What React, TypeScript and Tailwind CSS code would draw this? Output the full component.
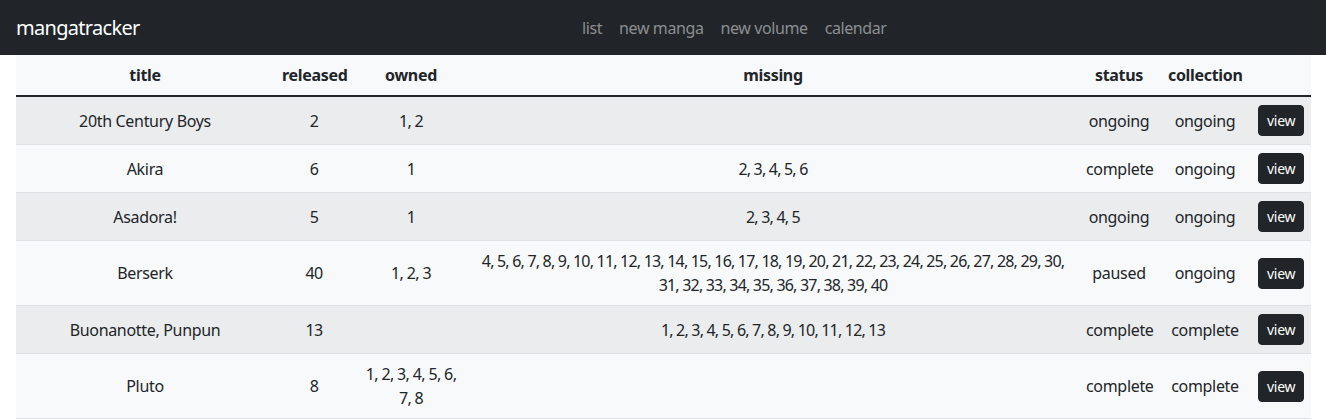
import React from 'react';

type Manga = { title: string; released: number; owned: number[]; status: string; collection: string };

const MANGAS: Manga[] = [
  { title: '20th Century Boys', released: 2, owned: [1, 2], status: 'ongoing', collection: 'ongoing' },
  { title: 'Akira', released: 6, owned: [1], status: 'complete', collection: 'ongoing' },
  { title: 'Asadora!', released: 5, owned: [1], status: 'ongoing', collection: 'ongoing' },
  { title: 'Berserk', released: 40, owned: [1, 2, 3], status: 'paused', collection: 'ongoing' },
  { title: 'Buonanotte, Punpun', released: 13, owned: [], status: 'complete', collection: 'complete' },
  { title: 'Pluto', released: 8, owned: [1, 2, 3, 4, 5, 6, 7, 8], status: 'complete', collection: 'complete' },
];

const missingOf = (m: Manga) =>
  Array.from({ length: m.released }, (_, i) => i + 1).filter((n) => !m.owned.includes(n));

const App: React.FC = () => {
  return (
    <div className="min-h-screen bg-white text-[#212529] text-base leading-6" style={{ fontFamily: '"Noto Sans", sans-serif' }}>
      <nav className="h-[55px] bg-[#212529] flex items-center px-4">
        <a className="text-white text-xl leading-[30px] w-[540px] tracking-[-0.035em]">mangatracker</a>
        <div className="flex gap-[17px] text-[#8c8e91] text-base ml-[26px] tracking-[-0.025em]">
          <a>list</a>
          <a>new manga</a>
          <a>new volume</a>
          <a>calendar</a>
        </div>
      </nav>

      <div className="px-4">
        <table className="w-full table-fixed border-collapse text-center bg-[#f8f9fa] tracking-[-0.02em]">
          <colgroup>
            <col className="w-[258px]" />
            <col className="w-[80px]" />
            <col className="w-[114px]" />
            <col className="w-[610px]" />
            <col className="w-[82px]" />
            <col className="w-[90px]" />
            <col className="w-[61px]" />
          </colgroup>
          <thead>
            <tr className="border-b-2 border-[#212529]">
              <th className="p-2 font-bold">title</th>
              <th className="p-2 font-bold">released</th>
              <th className="p-2 font-bold">owned</th>
              <th className="p-2 font-bold">missing</th>
              <th className="p-2 font-bold">status</th>
              <th className="p-2 font-bold">collection</th>
              <th className="p-2"></th>
            </tr>
          </thead>
          <tbody>
            {MANGAS.map((m, i) => (
              <tr key={m.title} className={`border-b border-[#dee2e6] ${i % 2 === 0 ? 'bg-[#ebeced]' : 'bg-[#f8f9fa]'}`}>
                <td className="p-2 align-middle">{m.title}</td>
                <td className="p-2 align-middle tracking-[-0.04em]">{m.released}</td>
                <td className="p-2 align-middle tracking-[-0.04em]">{m.owned.join(', ')}</td>
                <td className="p-2 align-middle tracking-[-0.05em]">{missingOf(m).join(', ')}</td>
                <td className="p-2 align-middle">{m.status}</td>
                <td className="p-2 align-middle">{m.collection}</td>
                <td className="p-2 align-middle">
                  <button className="bg-[#212529] text-white text-sm leading-[21px] px-2 py-1 border border-[#212529] rounded tracking-[-0.02em]">view</button>
                </td>
              </tr>
            ))}
          </tbody>
        </table>
      </div>
    </div>
  );
};

export default App;
